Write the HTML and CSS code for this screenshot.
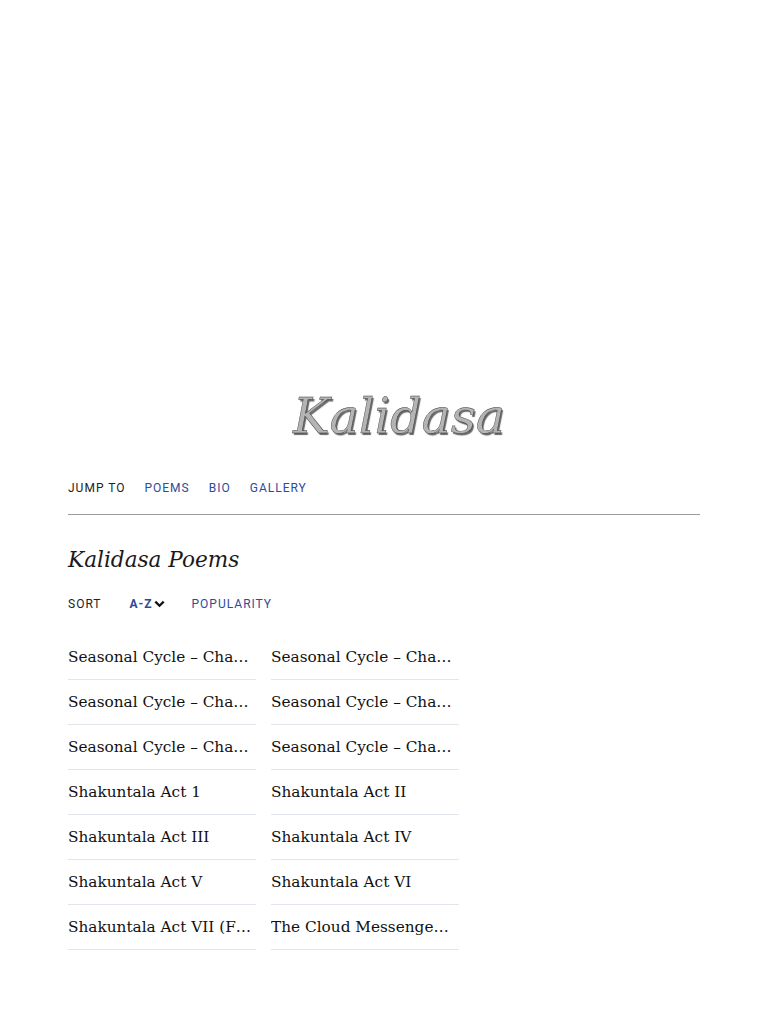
FILE: index.html
```html
<!DOCTYPE html>
<html>
<head>
<meta charset="utf-8">
<link rel="stylesheet" href="styles.css">
</head>
<body>
<div class="page">
  <header class="hero">
    <h1 class="title">Kalidasa</h1>
  </header>
  <nav class="jump">
    <span class="label">JUMP TO</span>
    <a class="link" href="#">POEMS</a>
    <a class="link" href="#">BIO</a>
    <a class="link" href="#">GALLERY</a>
  </nav>
  <hr class="rule">
  <h2 class="section-title">Kalidasa Poems</h2>
  <div class="sort">
    <span class="label">SORT</span>
    <a class="link active" href="#">A-Z<svg class="chev" width="11" height="8" viewBox="0 0 11 8"><path d="M1.3 1.6 L5.5 5.8 L9.7 1.6" fill="none" stroke="#111" stroke-width="2.2"/></svg></a>
    <a class="link" href="#">POPULARITY</a>
  </div>
  <ul class="poems">
    <li>Seasonal Cycle – Chapter 1</li>
    <li>Seasonal Cycle – Chapter 2</li>
    <li>Seasonal Cycle – Chapter 3</li>
    <li>Seasonal Cycle – Chapter 4</li>
    <li>Seasonal Cycle – Chapter 5</li>
    <li>Seasonal Cycle – Chapter 6</li>
    <li>Shakuntala Act 1</li>
    <li>Shakuntala Act II</li>
    <li>Shakuntala Act III</li>
    <li>Shakuntala Act IV</li>
    <li>Shakuntala Act V</li>
    <li>Shakuntala Act VI</li>
    <li>Shakuntala Act VII (Final)</li>
    <li>The Cloud Messenger (Meghaduta)</li>
  </ul>
</div>
</body>
</html>
```

FILE: styles.css
```css
html, body {
  margin: 0;
  padding: 0;
  background: #fff;
}
.page {
  padding: 0 68px;
  font-family: "DejaVu Serif", serif;
  color: #1a1a1a;
}
.hero {
  padding-top: 384px;
  display: flex;
  justify-content: center;
  padding-left: 30px;
}
.title {
  margin: 0;
  font-family: "DejaVu Serif", serif;
  font-style: italic;
  font-weight: normal;
  font-size: 49px;
  line-height: 66px;
  color: #b4b4b4;
  -webkit-text-stroke: 0.4px #333;
  text-shadow: 1.5px 1.5px 1px rgba(0,0,0,0.6);
}
.jump, .sort {
  display: flex;
  align-items: center;
  font-family: Roboto, "Liberation Sans", sans-serif;
  font-size: 12px;
  letter-spacing: 1px;
}
.jump {
  margin-top: 29px;
  height: 18px;
}
.label {
  color: #222;
  margin-right: 19px;
}
.sort .label {
  margin-right: 28px;
}
.link {
  color: #2e4a9a;
  text-decoration: none;
  margin-right: 19px;
  display: inline-flex;
  align-items: center;
}
.sort .link {
  margin-right: 27px;
}
.link.active {
  font-weight: bold;
}
.chev {
  margin-left: 1px;
}
.rule {
  border: none;
  border-top: 1px solid #9a9a9a;
  margin: 17px 0 0 0;
}
.section-title {
  margin: 29px 0 0 0;
  font-family: "DejaVu Serif", serif;
  font-style: italic;
  font-weight: normal;
  font-size: 21.6px;
  line-height: 32px;
  color: #1a1a1a;
}
.sort {
  margin-top: 19px;
  height: 18px;
}
.poems {
  list-style: none;
  margin: 22px 0 0 0;
  padding: 0;
  display: grid;
  grid-template-columns: 188px 188px;
  column-gap: 15px;
}
.poems li {
  height: 44px;
  line-height: 44px;
  padding-right: 3px;
  border-bottom: 1px solid #e1e5ec;
  font-size: 15.3px;
  white-space: nowrap;
  overflow: hidden;
  text-overflow: ellipsis;
  color: #111;
}
```
